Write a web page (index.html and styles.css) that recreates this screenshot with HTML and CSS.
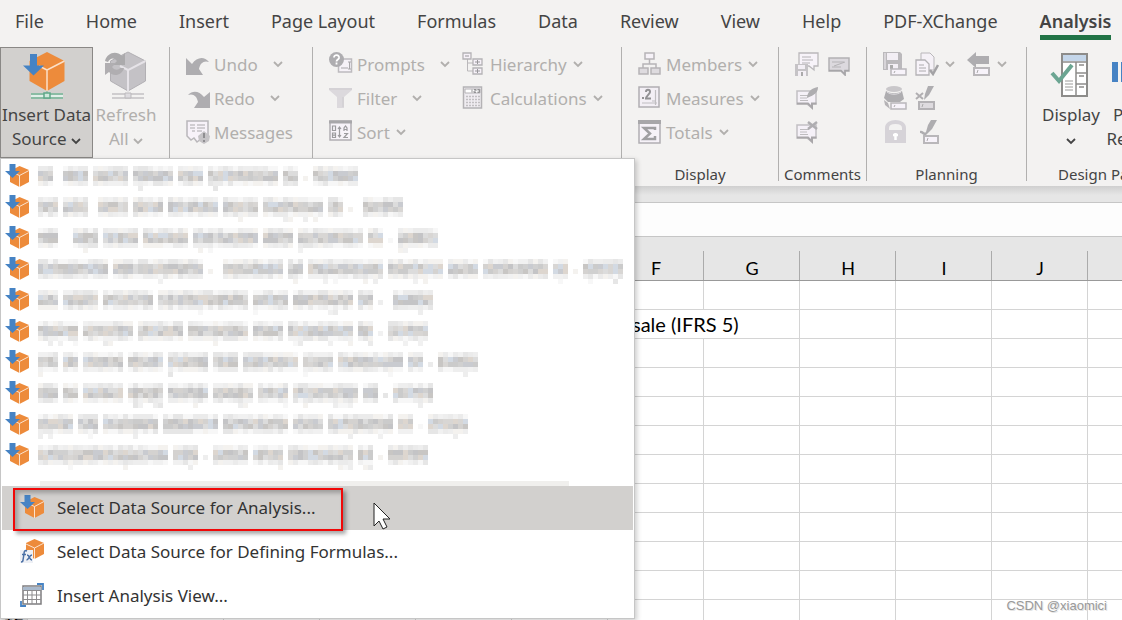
FILE: index.html
```html
<!DOCTYPE html>
<html lang="en">
<head>
    <meta charset="UTF-8">
    <meta name="viewport" content="width=device-width, initial-scale=1.0">
    <link rel="stylesheet" href="styles.css">
    <title>Analysis</title>
</head>
<body>
    <!-- Shared icons -->
    <svg class="defs" aria-hidden="true">
        <symbol id="chevron" viewBox="0 0 10 8"><path d="M1 2l4 4 4-4" fill="none" stroke="currentColor" stroke-width="1.8"/></symbol>
        <symbol id="source" viewBox="0 0 24 24">
            <path d="M14.500 2L24 6v12l-9.500 5L5 18V7z" fill="#ed8b3b"/>
            <path d="M14.500 23V11.500L24 6.500M14.500 11.500L9 9" fill="none" stroke="#fbe3cf"/>
            <path d="M4.500 0h6v7H15l-7.500 7L0 7h4.500z" fill="#4683c4"/>
        </symbol>
        <symbol id="field" viewBox="0 0 17 8"><path d="M1 1h15v6H1z" fill="#f7f3fa" stroke="#b9b7ba" stroke-width="1.500"/><path d="M4 5l1-2" stroke="#aaa"/></symbol>
        <symbol id="bubble" viewBox="0 0 24 24">
            <path d="M2 5h19v13h-4v4l-5-4H2z" fill="#f5f1f8" stroke="#c2c0c3" stroke-width="1.500"/>
            <path d="M2 17.500h11l4 4v-4h4.500" fill="none" stroke="#a9a7aa" stroke-width="2"/>
            <path d="M5 9.500h9M5 12h7M5 14.500h8" stroke="#bebcbf"/>
        </symbol>
    </svg>

    <nav class="tabs">
        <a href="#">File</a>
        <a href="#">Home</a>
        <a href="#">Insert</a>
        <a href="#">Page Layout</a>
        <a href="#">Formulas</a>
        <a href="#">Data</a>
        <a href="#">Review</a>
        <a href="#">View</a>
        <a href="#">Help</a>
        <a href="#">PDF-XChange</a>
        <a href="#" class="active">Analysis</a>
    </nav>

    <div class="ribbon">
        <div class="group group-source">
            <button class="big pressed">
                <svg width="50" height="50" viewBox="0 0 50 50">
                    <path d="M25 2l17.500 9v20L25 41 7.500 31V11z" fill="#ed8b3b"/>
                    <path d="M25 41V20l17.500-9M25 20l-8-4" fill="none" stroke="#fbe0c8" stroke-width="1.500"/>
                    <path d="M8 4h7v11.500h7l-10.500 10L1 15.500h7z" fill="#4683c4"/>
                    <path d="M9 44h32M9 48h32" stroke="#74b597" stroke-width="1.500"/><path d="M9 46h32" stroke="#e2efe9" stroke-width="2"/>
                    <path d="M25 41v2" stroke="#74b597"/><path d="M22 43h6v5h-6z" fill="#cfe8dc" stroke="#5fa688" stroke-width="1.500"/>
                </svg>
                <span>Insert Data</span>
                <span>Source <svg class="chev"><use href="#chevron"/></svg></span>
            </button>
            <button class="big" disabled>
                <svg width="50" height="50" viewBox="0 0 50 50">
                    <path d="M27 2l17.500 9v20L27 41 9.500 31V11z" fill="#c4c2c6" stroke="#b2b0b4"/>
                    <path d="M27 41V20l17.500-9M27 20l-8-4" fill="none" stroke="#e6e3e8" stroke-width="2"/>
                    <path d="M4 11C6 3 15 0 21 6l3-3v12H12l4-4c-3-4-7-3-9 1z" fill="#abaaac"/>
                    <path d="M23 18c-2 8-11 9-15 4l-4 3V13h11l-4 4c3 4 7 3 8 1z" fill="#b0aeb1"/>
                    <path d="M11 44h32M11 48h32" stroke="#c3c1c4" stroke-width="1.500"/><path d="M24 43h6v5h-6z" fill="#dedce0" stroke="#bbb9bc"/>
                </svg>
                <span>Refresh</span>
                <span>All <svg class="chev"><use href="#chevron"/></svg></span>
            </button>
        </div>

        <div class="group group-undo">
            <div class="commands">
                <button class="cmd wide" disabled>
                    <svg class="icon" viewBox="0 0 24 24"><path d="M0 6l6 6C11 5 18 4 23 10c-5-2-9 1-10 7l4 6H0z" fill="#aeadb0"/></svg>
                    Undo <svg class="chev"><use href="#chevron"/></svg>
                </button>
                <button class="cmd wide" disabled>
                    <svg class="icon" viewBox="0 0 24 24"><path d="M24 6l-6 5C13 5 7 4 2 9c5-2 9 1 10 7l-4 6h16z" fill="#aeadb0"/></svg>
                    Redo <svg class="chev"><use href="#chevron"/></svg>
                </button>
                <button class="cmd" disabled>
                    <svg class="icon" viewBox="0 0 24 24">
                        <path d="M1 1h21v16l-4 4-3-2-4 3-3-4-3 2-4-4z" fill="#f7f2f9" stroke="#b9b7ba" stroke-width="1.500"/>
                        <path d="M4 5h5M11 5h8M4 8h5M11 8h8M6 11h3M11 11h5" stroke="#aaa8ab"/>
                        <path d="M18 11l6 5-1 5-5 3-5-3-1-5z" fill="#c5c3c6"/><path d="M18 13v5M18 20v2" stroke="#8f8e91" stroke-width="2"/>
                    </svg>
                    Messages
                </button>
            </div>
        </div>

        <div class="group group-data">
            <div class="commands">
                <button class="cmd wide" disabled>
                    <svg class="icon" viewBox="0 0 24 24">
                        <path d="M9.500 7h13v13h-13z" fill="#f6f2f8" stroke="#bdbbbe" stroke-width="1.500"/><path d="M12 16h7M19 10h3M20.500 10v7M19 17h3" stroke="#a9a7aa"/>
                        <circle cx="7.500" cy="7.500" r="7.500" fill="#aeadb0"/><path d="M5 5.500C5 2 10.500 2.500 10 6c-.3 1.500-2.500 1.500-2.500 3.500M7.500 10.500v2" fill="none" stroke="#fff" stroke-width="1.800"/>
                    </svg>
                    Prompts <svg class="chev"><use href="#chevron"/></svg>
                </button>
                <button class="cmd wide" disabled>
                    <svg class="icon" viewBox="0 0 24 24"><path d="M0 2h23v2l-8 7v11H8V11L0 4z" fill="#dcd9dd"/><path d="M0 3h23M14 11v10" stroke="#cdcbce"/></svg>
                    Filter <svg class="chev"><use href="#chevron"/></svg>
                </button>
                <button class="cmd" disabled>
                    <svg class="icon" viewBox="0 0 24 24">
                        <path d="M1 1h21v19H1z" fill="#f7f3f9" stroke="#b1afb2" stroke-width="1.500"/><path d="M0 2h23" stroke="#a8a7aa" stroke-width="3"/>
                        <path d="M3.500 6h3v4.500h-3zM3.500 13h3v4.500h-3zM3.500 15.200h3M15 11V8l1.500-2L18 8v3M15 9.500h3M15 13.500h3.500L15 17.500h4M10.500 7v10M9 9l1.500-2L12 9M9 15l1.500 2 1.500-2" fill="none" stroke="#9c9b9e" stroke-width="1.200"/>
                    </svg>
                    Sort <svg class="chev"><use href="#chevron"/></svg>
                </button>
            </div>
            <div class="commands">
                <button class="cmd" disabled>
                    <svg class="icon" viewBox="0 0 24 24">
                        <path d="M5.500 7v12H11M5.500 11H11" fill="none" stroke="#bab8bb"/>
                        <path d="M1 1h8v6H1zM11 7h9v6h-9zM11 16h9v6h-9z" fill="#f6f1f8" stroke="#b4b2b5" stroke-width="1.300"/>
                        <path d="M3 4h4M13 10h5M15.500 8v4M13 19h5M15.500 17v4" stroke="#98979a"/>
                    </svg>
                    Hierarchy <svg class="chev"><use href="#chevron"/></svg>
                </button>
                <button class="cmd" disabled>
                    <svg class="icon" viewBox="0 0 24 24">
                        <path d="M1.500 1h18v21h-18z" fill="#efecf1" stroke="#b4b2b5" stroke-width="1.500"/><path d="M3 3h15v4H3z" fill="#fff" stroke="#b4b2b5"/>
                        <path d="M10 3.500v3M12 3.500h2v1.500h-2v1.500h2M15.500 3.500h2v3h-2M15.500 5h2" fill="none" stroke="#939295"/>
                        <path d="M4 10.500h14M4 13.500h14M4 16.500h14M4 19.500h14" stroke="#c1bfc2" stroke-width="1.500" stroke-dasharray="2 1"/>
                    </svg>
                    Calculations <svg class="chev"><use href="#chevron"/></svg>
                </button>
            </div>
        </div>

        <div class="group group-display">
            <div class="commands">
                <button class="cmd" disabled>
                    <svg class="icon" viewBox="0 0 24 24">
                        <path d="M11.500 7v5M5 17v-5h13v5" fill="none" stroke="#b6b4b7" stroke-width="1.500"/>
                        <path d="M7 1h9v6H7z" fill="#f6f2f8" stroke="#b6b4b7" stroke-width="1.500"/><path d="M1 16h9v6H1zM13 16h9v6h-9z" fill="#dedbdf" stroke="#b6b4b7" stroke-width="1.500"/>
                    </svg>
                    Members <svg class="chev"><use href="#chevron"/></svg>
                </button>
                <button class="cmd" disabled>
                    <svg class="icon" viewBox="0 0 24 24">
                        <path d="M1 1h20v20H1z" fill="#f3eff5" stroke="#b1afb2" stroke-width="1.500"/>
                        <path d="M4 12h2M8 6c0-3 4-3 4 0 0 2-4 4-4 6.500h5" fill="none" stroke="#929194" stroke-width="2"/><path d="M4 17h15M14 15h3M17.500 4v15" fill="none" stroke="#c0bec1" stroke-width="1.200"/>
                    </svg>
                    Measures <svg class="chev"><use href="#chevron"/></svg>
                </button>
                <button class="cmd" disabled>
                    <svg class="icon" viewBox="0 0 24 24">
                        <path d="M1 1h21v22H1z" fill="#f6f2f8" stroke="#b1afb2" stroke-width="1.500"/><path d="M0 2h23" stroke="#a8a7aa" stroke-width="4"/>
                        <path d="M17 10V8H6l6 5.500L6 19h11v-3" fill="none" stroke="#a09fa2" stroke-width="2.500"/>
                    </svg>
                    Totals <svg class="chev"><use href="#chevron"/></svg>
                </button>
            </div>
            <div class="group-name">Display</div>
        </div>

        <div class="group group-comments">
            <div class="commands">
                <div class="row">
                    <button class="cmd" disabled aria-label="Save comment">
                        <svg class="icon" viewBox="0 0 24 24">
                            <path d="M4 1h19v13h-4v4l-5-4H4z" fill="#f7f3f9" stroke="#bab8bb" stroke-width="1.300"/><path d="M7 5h9M7 8h11M7 11h8" stroke="#b5b3b6"/>
                            <path d="M0 12h13v12H0z" fill="#c5c3c6"/><path d="M3 13h7v4H3zM3 19h8v5H3z" fill="#f3eff5"/><path d="M7 20v4" stroke="#aaa" stroke-width="2"/>
                        </svg>
                    </button>
                    <button class="cmd" disabled aria-label="Show comment">
                        <svg class="icon" viewBox="0 0 24 24"><path d="M2 6h20v13h-4v4l-4-4H2z" fill="#dcd9de" stroke="#b3b1b4" stroke-width="1.500"/><path d="M2 18.500h12l4 4v-4h4" fill="none" stroke="#a7a6a9" stroke-width="1.500"/><path d="M5 10h12M5 15h9M7 14l11-4" stroke="#b5b3b6"/></svg>
                    </button>
                </div>
                <button class="cmd" disabled aria-label="Edit comment">
                    <svg class="icon" viewBox="0 0 24 24"><use href="#bubble"/><path d="M12 11c1-6 5-9 11-10 0 5-3 8-11 11z" fill="#aeadb0"/></svg>
                </button>
                <button class="cmd" disabled aria-label="Delete comment">
                    <svg class="icon" viewBox="0 0 24 24"><use href="#bubble"/><path d="M13 2l9 7M22 2l-9 7" stroke="#aeadb0" stroke-width="2.500"/></svg>
                </button>
            </div>
            <div class="group-name">Comments</div>
        </div>

        <div class="group group-planning">
            <div class="commands">
                <div class="row">
                    <button class="cmd" disabled aria-label="Save data">
                        <svg class="icon" viewBox="0 0 24 24"><path d="M0 0h17l2 2v16H0z" fill="#bbb9bc"/><path d="M4 1h11v7H4zM5 12h10v6H5z" fill="#f3eff5"/><path d="M1 1h2v16H1z" fill="#d7d4d8"/><path d="M7 13h3v4H7z" fill="#aaa"/><use href="#field" x="7" y="16" width="17" height="8"/></svg>
                    </button>
                    <button class="cmd" disabled aria-label="Recalculate">
                        <svg class="icon" viewBox="0 0 24 24"><path d="M6 1h9l4 4v13H6z" fill="#f5f1f7" stroke="#b9b7ba"/><path d="M1 8h9l4 4v11H1z" fill="#f7f3f9" stroke="#b4b2b5" stroke-width="1.300"/><path d="M4 13h5M4 16h7M4 19h7" stroke="#acaaad"/><path d="M15 18l3 4 5-9" fill="none" stroke="#a3a2a5" stroke-width="2.500"/></svg>
                        <svg class="chev"><use href="#chevron"/></svg>
                    </button>
                    <button class="cmd back" disabled aria-label="Back">
                        <svg class="icon" viewBox="0 0 24 24"><path d="M0 8l9-8v4h13v8H9v4z" fill="#aeadb0"/><path d="M7 16h15v7H7z" fill="#f7f3fa" stroke="#b9b7ba" stroke-width="2"/><path d="M10 21l1-3" stroke="#aaa"/></svg>
                        <svg class="chev"><use href="#chevron"/></svg>
                    </button>
                </div>
                <div class="row">
                    <button class="cmd" disabled aria-label="Planning objects">
                        <svg class="icon" viewBox="0 0 24 24"><ellipse cx="11" cy="3" rx="8" ry="3" fill="#c9c7ca"/><path d="M3 5c4 3 12 3 16 0l2 8-4 3H5l-4-4z" fill="#aeadb0"/><path d="M4 6c4 3 10 3 14 0" fill="none" stroke="#dedce0"/><path d="M1 14l4 3 2 6-5-4z" fill="#b5b3b6"/><use href="#field" x="7" y="16" width="17" height="8"/></svg>
                    </button>
                    <button class="cmd" disabled aria-label="Discard input">
                        <svg class="icon" viewBox="0 0 24 24"><path d="M1 7l7 6M8 7l-7 6" stroke="#b0aeb1" stroke-width="2"/><path d="M13 0h6l-5 9-5 5 1-6z" fill="#aeadb0"/><path d="M4 16h15v7H4z" fill="#dedbdf" stroke="#b4b2b5" stroke-width="2"/><path d="M7 21l1-3" stroke="#aaa"/></svg>
                    </button>
                </div>
                <div class="row">
                    <button class="cmd" disabled aria-label="Lock">
                        <svg class="icon" viewBox="0 0 24 24"><path d="M4 11V8c0-8 17-8 17 0v3" fill="none" stroke="#d6d3d8" stroke-width="4"/><path d="M2 10h21v13H2z" fill="#d6d3d8"/><path d="M12.500 13v7M10 15h5" stroke="#fff" stroke-width="2.500"/></svg>
                    </button>
                    <button class="cmd" disabled aria-label="Confirm input">
                        <svg class="icon" viewBox="0 0 24 24"><path d="M5 11c3-1 4 3 6 1l2-7 3-5h6l-5 9-6 6c-3 1-4-2-6-2z" fill="#aeadb0"/><path d="M9 16h14v7H9z" fill="#f7f3fa" stroke="#b9b7ba" stroke-width="2"/><path d="M12 21l1-3" stroke="#aaa"/></svg>
                    </button>
                </div>
            </div>
            <div class="group-name">Planning</div>
        </div>

        <div class="group group-panel">
            <div class="buttons">
                <button class="big">
                    <svg width="50" height="50" viewBox="0 0 50 50">
                        <path d="M16 4h25v42H16z" fill="#fff" stroke="#8d8c8a" stroke-width="2"/><path d="M17 5h23v6H17z" fill="#c4d6ea"/>
                        <path d="M16 12h25M30 12v34M30 23h11M30 34h11M33 15h5M33 26h5M33 37h5" stroke="#8d8c8a" stroke-width="1.500"/>
                        <path d="M19 31h8M19 34h8M19 37h8M19 40h8" stroke="#9c9b99"/>
                        <path d="M6 23l7 8 13-16" fill="none" stroke="#6ba592" stroke-width="4"/>
                    </svg>
                    <span>Display</span>
                    <span><svg class="chev"><use href="#chevron"/></svg></span>
                </button>
                <button class="big">
                    <svg width="50" height="50" viewBox="0 0 50 50"><path d="M0 12h6v20H0zM9 12h6v20H9z" fill="#4683c4"/></svg>
                    <span>Pause</span>
                    <span>Refresh</span>
                </button>
            </div>
            <div class="group-name">Design Panel</div>
        </div>
    </div>

    <div class="gutter"></div>
    <div class="formula-bar"></div>
    <div class="sheet-area">
        <table class="sheet">
            <thead>
                <tr id="columns"><th class="row-no"></th><th class="first">A</th></tr>
            </thead>
            <tbody id="rows"></tbody>
        </table>
    </div>

    <div class="menu">
        <ul class="recent" id="recent"></ul>
        <div class="separator"></div>
        <button class="menu-item selected">
            <svg class="icon"><use href="#source"/></svg>
            Select Data Source for Analysis...
            <span class="marker"></span>
            <svg class="pointer" viewBox="0 0 20 30"><path d="M1 1v23l5-5 4 8 4-2-4-8h7z" fill="#fff" stroke="#222"/></svg>
        </button>
        <button class="menu-item">
            <svg class="icon" viewBox="0 0 24 24">
                <path d="M14.500 0L24 4v11l-9.500 5L6 15V4z" fill="#ed8b3b"/><path d="M14.500 20V9L24 4M14.500 9L6 5" fill="none" stroke="#fbe3cf"/>
                <path d="M0 11h13v13H0z" fill="#eef0f5"/>
                <path d="M7 12c-2-1-3 0-3 3l-1 6c0 2-1 2-2 2M2 15.500h4M7 16c3 0 2 5 5 5M12 16c-3 0-3 5-5.500 5" fill="none" stroke="#4a6fa5" stroke-width="1.500"/>
            </svg>
            Select Data Source for Defining Formulas...
        </button>
        <button class="menu-item">
            <svg class="icon" viewBox="0 0 24 24">
                <path d="M3 3h18v18H3z" fill="#fff" stroke="#7f7e80" stroke-width="1.500"/><path d="M3 4h18v3H3z" fill="#a9b9cc"/>
                <path d="M3 7.500h18M3 12h18M3 16.500h18M7.500 7v14M12 7v14M16.500 7v14" stroke="#8d8c8e"/>
                <path d="M17 1h6v6M1 18v5h5" fill="none" stroke="#4683c4" stroke-width="1.800"/>
            </svg>
            Insert Analysis View...
        </button>
    </div>

    <div class="watermark">CSDN @xiaomici</div>

    <script>
        // Column letters B - K
        const columns = document.getElementById('columns');
        'BCDEFGHIJK'.split('').forEach(letter => {
            const th = document.createElement('th');
            th.textContent = letter;
            columns.appendChild(th);
        });

        // Sheet rows, the second one holds the text that runs from F into G
        const rows = document.getElementById('rows');
        for (let r = 1; r <= 12; r++) {
            const tr = rows.insertRow();
            tr.innerHTML = '<th class="row-no">' + r + '</th>';
            for (let c = 0; c < 11; c++) {
                const td = tr.insertCell();
                if (r === 2 && c === 5) {
                    td.colSpan = 2;
                    td.className = 'overflow';
                    td.textContent = 'sale (IFRS 5)';
                    c++;
                }
            }
        }

        // Hidden source names: start and end of each masked word, in blocks of 5px
        const names = [
            [[0, 3], [5, 10], [11, 18], [19, 27], [28, 33], [34, 48], [49, 52], [53, 54], [55, 64]],
            [[0, 4], [5, 10], [12, 18], [19, 25], [26, 36], [37, 44], [45, 57], [58, 61], [62, 63], [65, 73]],
            [[0, 4], [7, 12], [13, 20], [21, 30], [31, 44], [45, 51], [52, 65], [66, 69], [70, 71], [72, 80]],
            [[0, 14], [15, 33], [34, 35], [37, 49], [50, 53], [54, 69], [70, 81], [82, 88], [89, 102], [103, 106], [107, 108], [109, 117]],
            [[0, 4], [5, 12], [13, 23], [24, 42], [43, 50], [51, 63], [64, 67], [68, 69], [71, 79]],
            [[0, 8], [9, 19], [20, 29], [30, 42], [43, 49], [50, 63], [64, 67], [68, 69], [70, 78]],
            [[0, 4], [5, 8], [9, 17], [18, 25], [26, 34], [35, 40], [41, 52], [53, 59], [60, 73], [74, 77], [78, 79], [80, 88]],
            [[0, 4], [5, 8], [9, 17], [18, 25], [26, 34], [35, 43], [44, 50], [51, 64], [65, 68], [69, 70], [71, 79]],
            [[0, 7], [8, 12], [13, 24], [25, 36], [37, 50], [51, 57], [58, 71], [72, 75], [76, 77], [78, 86]],
            [[0, 26], [27, 32], [33, 34], [35, 42], [43, 49], [50, 63], [64, 67], [68, 69], [70, 78]]
        ];
        const tints = ['#d4d2d0', '#cbcbcb', '#dcdcdc', '#c9cbd0', '#d8d6d4', '#c8c6c4', '#ddd6cf', '#d3dae3', '#d0d0d0', '#c4c4c6'];
        const light = ['#f1f1f1', '#ebebeb', '#f7f7f7', '#eeeeee', '#e6e6e6', '#f4f2ef'];

        let seed = 7;
        function pick(list) {
            seed = (seed * 16807) % 2147483647;
            return list[seed % list.length];
        }

        // Draw one masked name
        function mask(words) {
            let cells = '';
            words.forEach(([start, end]) => {
                const dash = end - start === 1;
                for (let x = start; x < end; x++) {
                    for (let y = 0; y < 5; y++) {
                        if (dash && y !== 2) continue;
                        if (y === 4 && pick([0, 0, 0, 0, 0, 0, 0, 0, 1]) === 0) continue;
                        const fill = dash || y === 0 || y >= 3 ? pick(light) : pick(tints);
                        cells += `<rect x="${x}" y="${y}" width="1" height="1" fill="${fill}"/>`;
                    }
                }
            });
            return `<svg class="mask" viewBox="0 0 118 5" aria-hidden="true">${cells}</svg>`;
        }

        document.getElementById('recent').innerHTML = names.map((words, i) =>
            `<li><button aria-label="Recent source ${i + 1}"><svg class="icon"><use href="#source"/></svg>${mask(words)}</button></li>`
        ).join('');
    </script>
</body>
</html>
```

FILE: styles.css
```css
* {
    box-sizing: border-box;
}

body {
    margin: 0;
    height: 100vh;
    overflow: hidden;
    position: relative;
    font-family: 'Noto Sans', 'Open Sans', sans-serif;
    color: #444;
    background-color: #fff;
}

button {
    margin: 0;
    padding: 0;
    border: 0;
    background: none;
    font: inherit;
    color: inherit;
    white-space: nowrap;
}

svg {
    flex: none;
}

.defs {
    position: absolute;
    width: 0;
    height: 0;
}

.icon {
    width: 24px;
    height: 24px;
}

.chev {
    width: 10px;
    height: 8px;
}

/* Tabs */
.tabs {
    display: flex;
    gap: 42px;
    height: 47px;
    padding: 6px 0 0 15px;
    background-color: #f3f2f1;
}

.tabs a {
    height: 34px;
    font-size: 18px;
    line-height: 30px;
    color: #444;
    text-decoration: none;
    white-space: nowrap;
}

.tabs .active {
    font-weight: 600;
    border-bottom: 5px solid #217346;
}

/* Ribbon */
.ribbon {
    display: flex;
    height: 139px;
    overflow: hidden;
    background-color: #f3f2f1;
    font-size: 17px;
}

.group {
    display: flex;
    flex: none;
    padding-left: 16px;
    height: 134px;
    border-right: 1px solid #b1b0af;
}

.group-source {
    width: 170px;
    padding-left: 0;
}

.group-undo {
    width: 143px;
}

.group-data {
    width: 309px;
    gap: 12px;
}

.group-display {
    width: 157px;
}

.group-comments {
    width: 88px;
}

.group-planning {
    width: 160px;
}

.group-display,
.group-comments,
.group-planning,
.group-panel {
    flex-direction: column;
    justify-content: space-between;
}

.group-panel {
    width: 190px;
    padding-left: 11px;
    border-right: 0;
}

.group-name {
    margin-left: -16px;
    font-size: 15px;
    line-height: 14px;
    text-align: center;
}

.group-panel .group-name {
    margin-left: -11px;
    padding-right: 36px;
}

.commands {
    display: flex;
    flex-direction: column;
}

.buttons {
    display: flex;
}

.row {
    display: flex;
    gap: 8px;
}

.cmd {
    display: flex;
    align-items: center;
    gap: 4px;
    height: 34px;
    color: #b1afad;
}

.cmd .chev {
    margin-left: 2px;
}

.cmd.wide .chev {
    margin-left: 11px;
}

.cmd.back {
    margin-left: 4px;
}

.big {
    display: flex;
    flex-direction: column;
    align-items: center;
    width: 66px;
    height: 111px;
    padding-top: 3px;
    line-height: 24px;
}

.big > svg {
    margin-bottom: 3px;
}

.big span {
    min-height: 24px;
}

.big:disabled {
    color: #b1afad;
}

.big.pressed {
    width: 93px;
    background-color: #d2d0ce;
    border: 1px solid #8a8886;
    padding-top: 2px;
}

/* Sheet */
.gutter {
    height: 16px;
    background: linear-gradient(#cfcfcf, #e6e6e6 9px);
}

.formula-bar {
    height: 35px;
    background-color: #fdfdfd;
    border-top: 1px solid #c6c6c6;
    border-bottom: 1px solid #c6c6c6;
}

.sheet-area {
    overflow: hidden;
}

.sheet {
    width: 1184px;
    min-width: 100%;
    table-layout: fixed;
    border-collapse: separate;
    border-spacing: 0;
    font-family: Lato, sans-serif;
    font-size: 18px;
    color: #000;
}

.sheet thead th {
    width: 96px;
    height: 44px;
    padding: 19px 0 0;
    line-height: 22px;
    font-weight: normal;
    background: linear-gradient(#ababab, #ababab) right bottom / 1px 29px no-repeat #e6e6e6;
    border-bottom: 1px solid #999;
}

.sheet thead .row-no {
    width: 28px;
}

.sheet thead .first {
    width: 196px;
}

.sheet td,
.sheet tbody th {
    height: 29px;
    padding: 0;
    line-height: 22px;
    border-right: 1px solid #d4d4d4;
    border-bottom: 1px solid #d4d4d4;
}

.sheet tbody th {
    font-weight: normal;
    background-color: #e6e6e6;
}

.sheet .overflow {
    padding: 0 0 0 24px;
    font-size: 20px;
}

/* Drop-down menu */
.menu {
    position: absolute;
    top: 158px;
    left: 0;
    width: 635px;
    padding: 1px 1px 0;
    background-color: #fff;
    border: 1px solid #c6c6c6;
    box-shadow: 2px 2px 5px rgba(0, 0, 0, 0.2);
}

.recent {
    margin: 0;
    padding: 0;
    list-style: none;
}

.recent button {
    display: flex;
    align-items: center;
    gap: 9px;
    width: 100%;
    height: 31px;
    padding-left: 3px;
}

.mask {
    width: 590px;
    height: 25px;
    margin-top: 6px;
    shape-rendering: crispEdges;
}

.separator {
    height: 5px;
    margin: 11px 64px 0 38px;
    background-color: #f0efed;
}

.menu-item {
    display: flex;
    align-items: center;
    gap: 13px;
    position: relative;
    width: 100%;
    height: 44px;
    padding: 0 0 2px 18px;
    font-size: 17px;
    color: #333;
}

.menu-item.selected {
    background-color: #d2d0ce;
}

/* Red frame and mouse pointer over the selected item */
.marker {
    position: absolute;
    top: 2px;
    left: 11px;
    width: 330px;
    height: 43px;
    border: 2px solid #f00808;
    box-shadow: 3px 3px 4px rgba(0, 0, 0, 0.35), inset 3px 3px 4px rgba(0, 0, 0, 0.25);
}

.pointer {
    position: absolute;
    top: 16px;
    left: 371px;
    width: 20px;
    height: 30px;
}

.watermark {
    position: absolute;
    right: 15px;
    bottom: 6px;
    font-family: 'Liberation Sans', Arial, sans-serif;
    font-size: 13px;
    line-height: 17px;
    color: #999;
    text-shadow: 1px 1px 0 #e4e4e4;
}
```
